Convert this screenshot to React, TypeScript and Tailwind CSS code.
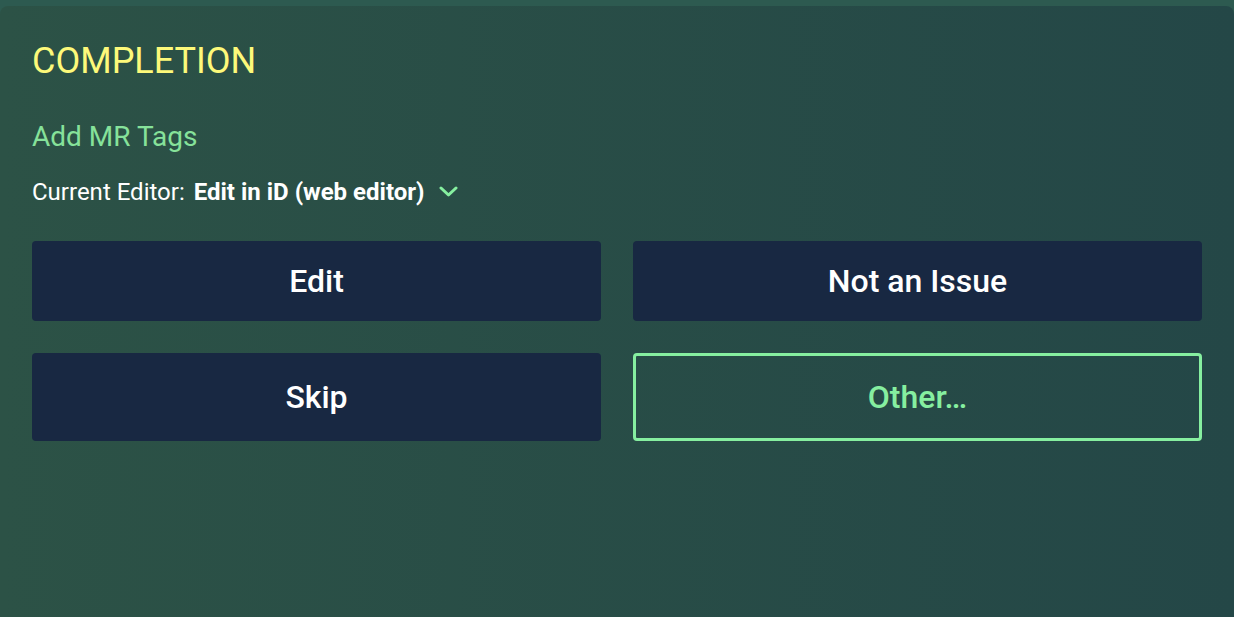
const Button = ({ label, outline }: { label: string; outline?: boolean }) => (
  <button
    className={
      outline
        ? 'rounded border-[3px] border-[#86efa0] text-[#86efa0] text-[32px] leading-none font-medium'
        : 'rounded bg-[#182842] text-white text-[32px] leading-none font-medium'
    }
  >
    {label}
  </button>
);

export default function App() {
  return (
    <div className="w-[1234px] h-[617px] bg-[#2d5a50] pt-[6px] overflow-hidden font-['Roboto',sans-serif]">
      <div className="h-full rounded-t-lg bg-gradient-to-r from-[#2c5246] to-[#244747] px-8 pt-[37px]">
        <h2 className="text-[36px] leading-[36px] text-[#fdf97a]">COMPLETION</h2>
        <div className="mt-[44px] text-[28px] leading-[28px] text-[#86e29a]">Add MR Tags</div>
        <div className="mt-[29px] flex items-center h-6 text-[24px] leading-[24px] text-white">
          <span>Current Editor:</span>
          <span className="ml-[9px] font-bold">Edit in iD (web editor)</span>
          <svg className="ml-[15px] mt-[-2px]" width="19" height="11" viewBox="0 0 19 11" fill="none">
            <path d="M2 2 L9.5 9 L17 2" stroke="#86efa0" strokeWidth="3" strokeLinecap="round" strokeLinejoin="round" />
          </svg>
        </div>
        <div className="mt-[37px] grid grid-cols-2 gap-x-8 gap-y-8 grid-rows-[80px_88px]">
          <Button label="Edit" />
          <Button label="Not an Issue" />
          <Button label="Skip" />
          <Button label="Other…" outline />
        </div>
      </div>
    </div>
  );
}
